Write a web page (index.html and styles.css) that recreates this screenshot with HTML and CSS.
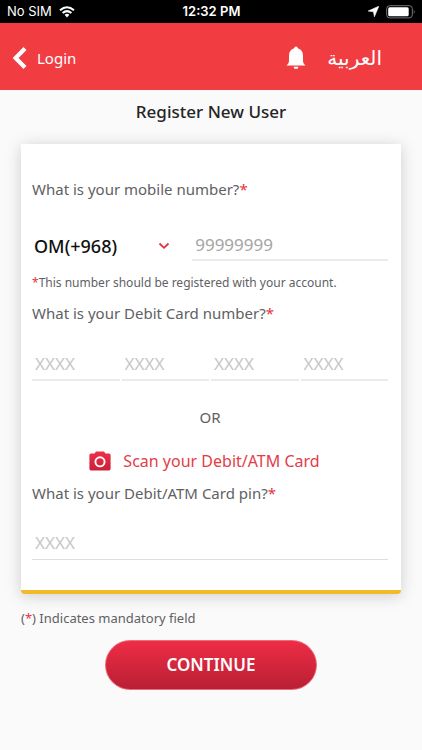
FILE: index.html
```html
<!DOCTYPE html>
<html lang="en">
<head>
<meta charset="utf-8">
<meta name="viewport" content="width=device-width, initial-scale=1">
<title>Register New User</title>
<link rel="stylesheet" href="styles.css">
</head>
<body>
<div class="status">
  <div class="status-left">
    <span>No SIM</span>
    <svg width="16" height="12" viewBox="0 0 16 12" aria-hidden="true"><g fill="none" stroke="#fff" stroke-width="2"><path d="M1 4.300Q8-1.800 15 4.300"/><path d="M3.600 7.100Q8 3.200 12.400 7.100"/></g><path d="M5.600 8.800Q8 6.900 10.400 8.800L8 11.400Z" fill="#fff"/></svg>
  </div>
  <strong class="clock">12:32 PM</strong>
  <div class="status-right">
    <svg width="11" height="11" viewBox="0 0 11 11" aria-hidden="true"><path d="M10.800.200L6.400 10.800L5.500 5.800L.200 5Z" fill="#fff" stroke="#fff" stroke-width=".6"/></svg>
    <svg width="30" height="14" viewBox="0 0 30 14" aria-hidden="true"><rect x=".7" y=".7" width="25.600" height="12.200" rx="3" fill="none" stroke="#777"/><rect x="2.200" y="2.300" width="20.500" height="9" rx="1.500" fill="#fff"/><path d="M27.800 4.600Q29.400 6.800 27.800 9Z" fill="#888"/></svg>
  </div>
</div>
<header class="header">
  <a class="back" href="#login">
    <svg width="15" height="24" viewBox="0 0 15 24" aria-hidden="true"><path d="M13 2.500L3.600 12L13 21.500" fill="none" stroke="#fff" stroke-width="4.200"/></svg>
    <span>Login</span>
  </a>
  <div class="header-actions">
    <button class="bell" type="button" aria-label="Notifications"><svg width="20" height="24" viewBox="0 0 20 24"><path d="M10 .500a1.700 1.700 0 0 1 1.700 1.700C15.300 3.100 17 6 17 9.500V14.500C17 17 18 18.200 19.600 19.600H.400C2 18.200 3 17 3 14.500V9.500C3 6 4.700 3.100 8.300 2.200A1.700 1.700 0 0 1 10 .500ZM7.500 20.800H12.500Q12.300 23 10 23T7.500 20.800Z" fill="#fff"/></svg></button>
    <a class="language" href="#ar" lang="ar">العربية</a>
  </div>
</header>
<main class="page">
  <h1 class="title">Register New User</h1>
  <form>
    <section class="card">
      <label class="label" for="mobile">What is your mobile number?<b class="req">*</b></label>
      <div class="phone">
        <div class="country">
          <select aria-label="Country code"><option>OM(+968)</option></select>
          <svg class="chevron" width="12" height="8" viewBox="0 0 12 8" aria-hidden="true"><path d="M1.500 1.500L6 5.800L10.500 1.500" fill="none" stroke="#e0323f" stroke-width="1.800"/></svg>
        </div>
        <input class="field number" id="mobile" type="tel" placeholder="99999999">
      </div>
      <p class="hint"><span class="req">*</span>This number should be registered with your account.</p>
      <label class="label" for="card-1">What is your Debit Card number?<b class="req">*</b></label>
      <div class="digits">
        <input class="field" id="card-1" placeholder="XXXX" aria-label="Card digits 1 to 4">
        <input class="field" placeholder="XXXX" aria-label="Card digits 5 to 8">
        <input class="field" placeholder="XXXX" aria-label="Card digits 9 to 12">
        <input class="field" placeholder="XXXX" aria-label="Card digits 13 to 16">
      </div>
      <p class="or">OR</p>
      <button class="scan" type="button">
        <svg width="22" height="20" viewBox="0 0 22 20" aria-hidden="true"><defs><linearGradient id="red" x1="0" y1="0" x2="0" y2="1"><stop stop-color="#ee2f48"/><stop offset="1" stop-color="#ca2139"/></linearGradient></defs><path d="M2 2.500H5.500L7 .600H15L16.500 2.500H20Q21.600 2.500 21.600 4V17.800Q21.600 19.400 20 19.400H2Q.400 19.400 .400 17.800V4Q.400 2.500 2 2.500Z" fill="url(#red)"/><circle cx="11" cy="10.800" r="4.600" fill="none" stroke="#fff" stroke-width="1.900"/></svg>
        <span>Scan your Debit/ATM Card</span>
      </button>
      <label class="label" for="pin">What is your Debit/ATM Card pin?<b class="req">*</b></label>
      <input class="field pin" id="pin" placeholder="XXXX">
    </section>
    <p class="mandatory">(<span class="req">*</span>) Indicates mandatory field</p>
    <button class="continue" type="submit">CONTINUE</button>
  </form>
</main>
</body>
</html>
```
FILE: styles.css
```css
* { box-sizing: border-box; }
body { margin: 0; min-height: 100vh; background: #fafafa; color: #606163; font: 15px/24px "Noto Sans", sans-serif; }
h1, p { margin: 0; }
button, input, select { font: inherit; border: 0; border-radius: 0; padding: 0; background: none; }
a { color: inherit; text-decoration: none; }
svg { display: block; flex: none; }

.status { display: grid; grid-template-columns: 1fr auto 1fr; align-items: center; height: 23px; padding: 0 6px 0 7px; background: #000; color: #fff; font: 13px/23px Inter, sans-serif; }
.status-left, .status-right { display: flex; align-items: center; gap: 7px; }
.status-right { justify-content: flex-end; }
.clock { font-weight: 600; }

.header { display: flex; align-items: center; justify-content: space-between; height: 67px; padding: 3px 40px 0 12px; background: #f13d42; color: #fff; }
.back { display: flex; align-items: center; gap: 10px; }
.header-actions { display: flex; align-items: center; gap: 21px; }
.bell { color: #fff; }
.language { font: 20px/24px "DejaVu Sans", sans-serif; }

.page { padding: 10px 21px 60px; }
.title { margin-bottom: 20px; color: #242426; font-size: 17px; font-weight: 500; line-height: 24px; text-align: center; }
.card { padding: 33px 13px 30px 11px; background: #fff; border-bottom: 4px solid #f2b929; border-radius: 0 0 4px 4px; box-shadow: 0 2px 16px rgba(0, 0, 0, .18); }
.label { display: block; }
.req { color: #e8323e; font-weight: 400; }
.phone { display: grid; grid-template-columns: 45fr 55fr; margin-top: 20px; }
.country { display: grid; grid-template-columns: 1fr auto; align-items: center; padding: 10px 22px 0 2px; }
.country select { appearance: none; grid-area: 1 / 1 / 2 / 3; height: 30px; color: #111; font-size: 18px; font-weight: 500; }
.chevron { grid-area: 1 / 2; pointer-events: none; }
.field { display: block; width: 100%; min-width: 0; height: 40px; padding: 6px 3px 0; border-bottom: 2px solid #ebebeb; color: #333; font-size: 17px; }
.field::placeholder { color: #c7c7c7; opacity: 1; }
.number { padding-top: 8px; }
.number::placeholder { color: #a5a5a5; }
.hint { margin: 14px 0 10px; font-size: 12px; line-height: 16px; }
.digits { display: grid; grid-template-columns: repeat(4, 1fr); gap: 2px; margin-top: 16px; }
.or { margin: 24px 0 20px; text-align: center; }
.scan { display: flex; align-items: center; gap: 12px; margin: 0 auto 8px; padding-right: 11px; color: #e33d47; font-size: 16px; line-height: 24px; }
.pin { margin-top: 15px; border-bottom-width: 1px; border-color: #ddd; }
.mandatory { margin: 14px 0 12px; font-size: 13px; line-height: 20px; }
.continue { display: block; width: 56%; height: 50px; margin: 0 auto; border: 1px solid #ee6c7b; border-radius: 25px; background: linear-gradient(#ee2d46, #b91f34); color: #fff; font-size: 17px; font-weight: 600; }
```
